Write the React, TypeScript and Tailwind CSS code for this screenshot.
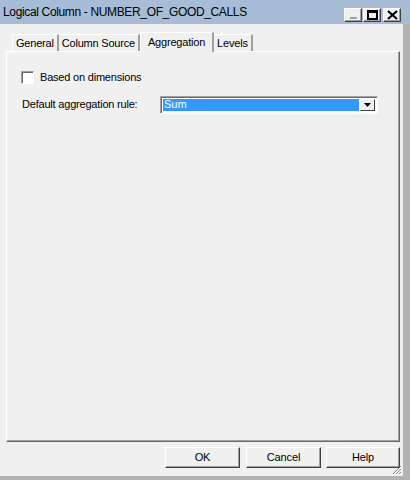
import React from "react";

const font = { fontFamily: '"Liberation Sans", Arial, sans-serif' };

function CaptionButton({ children }: { children: React.ReactNode }) {
  return (
    <div className="flex h-[14px] w-[18px] items-center justify-center border border-t-white border-l-white border-r-[#404040] border-b-[#404040] bg-[#f0f0f0] shadow-[inset_-1px_-1px_0_#a0a0a0]">
      {children}
    </div>
  );
}

function PushButton({ label, width }: { label: string; width: string }) {
  return (
    <button
      type="button"
      className={
        "flex h-[21px] items-center justify-center border border-t-white border-l-white border-r-[#404040] border-b-[#404040] bg-[#f0f0f0] text-[11px] tracking-[-0.1px] text-black shadow-[inset_-1px_-1px_0_#a0a0a0] " +
        width
      }
    >
      {label}
    </button>
  );
}

function Tab({ label, active, first }: { label: string; active?: boolean; first?: boolean }) {
  if (active) {
    return (
      <div className="relative z-10 -mb-px flex h-[20px] items-center border-l border-t border-white border-r-2 border-r-[#a0a0a0] bg-[#f0f0f0] px-[7px] text-[11px] tracking-[-0.2px]">
        {label}
      </div>
    );
  }
  return (
    <div
      className={
        "mt-[3px] flex h-[17px] items-center border-t border-white border-r-2 border-r-[#a0a0a0] px-[3px] text-[11px] tracking-[-0.2px] " +
        (first ? "border-l" : "")
      }
    >
      {label}
    </div>
  );
}

export default function App() {
  return (
    <div className="h-[480px] w-[410px] bg-[#b3b3b3] text-black" style={font}>
      <div className="flex h-[24px] items-center justify-between bg-[#a7bcd6] pl-[3px] pr-[9px]">
        <span className="text-[12px] tracking-[-0.35px]">Logical Column - NUMBER_OF_GOOD_CALLS</span>
        <div className="mt-[5px] flex items-center gap-[1px]">
          <CaptionButton>
            <span className="mt-[7px] block h-[2px] w-[7px] bg-[#a0a0a0]" />
          </CaptionButton>
          <CaptionButton>
            <span className="block h-[10px] w-[11px] border-2 border-t-[3px] border-black" />
          </CaptionButton>
          <div className="ml-[1px]">
            <CaptionButton>
              <svg width="11" height="10" viewBox="0 0 11 10">
                <path d="M1 1 L10 9 M10 1 L1 9" stroke="black" strokeWidth="2.2" />
              </svg>
            </CaptionButton>
          </div>
        </div>
      </div>
      <div className="flex h-[452px] w-[403px] flex-col bg-[#f0f0f0]">
        <div className="flex h-[27px] items-end pl-[12px]">
          <Tab label="General" first />
          <Tab label="Column Source" />
          <Tab label="Aggregation" active />
          <Tab label="Levels" />
        </div>
        <div className="ml-[6px] flex h-[391px] w-[394px] flex-col border border-t-white border-l-white border-r-[#696969] border-b-[#696969] shadow-[inset_-1px_-1px_0_#a0a0a0]">
          <label className="ml-[14px] mt-[17px] flex items-center gap-[6px] text-[11px] tracking-[-0.2px]">
            <span className="block h-[13px] w-[13px] border border-t-[#a0a0a0] border-l-[#a0a0a0] border-r-white border-b-white bg-white shadow-[inset_1px_1px_0_#696969]" />
            Based on dimensions
          </label>
          <div className="mt-[10px] flex items-center pl-[15px]">
            <span className="w-[138px] text-[11px] tracking-[-0.2px]">Default aggregation rule:</span>
            <div className="flex h-[18px] w-[218px] items-stretch border border-t-[#a0a0a0] border-l-[#a0a0a0] border-r-white border-b-white bg-white p-[2px] shadow-[inset_1px_1px_0_#696969]">
              <div className="flex flex-1 items-center bg-[#3399ff] pl-[1px] text-[11px] text-white">Sum</div>
              <div className="ml-[1px] flex w-[15px] items-center justify-center border border-t-white border-l-white border-r-[#404040] border-b-[#404040] bg-[#f0f0f0]">
                <svg width="7" height="4" viewBox="0 0 7 4">
                  <path d="M0 0 H7 L3.5 4 Z" fill="black" />
                </svg>
              </div>
            </div>
          </div>
        </div>
        <div className="relative flex flex-1 items-start justify-end pr-[3px] pt-[5px]">
          <PushButton label="OK" width="w-[75px]" />
          <div className="w-[6px]" />
          <PushButton label="Cancel" width="w-[75px]" />
          <div className="w-[5px]" />
          <PushButton label="Help" width="w-[74px]" />
          <svg className="absolute bottom-[1px] right-[1px]" width="11" height="11" viewBox="0 0 11 11">
            <path d="M10 2 L2 10 M10 5 L5 10 M10 8 L8 10" stroke="#808080" strokeWidth="1" />
            <path d="M10 3 L3 10 M10 6 L6 10 M10 9 L9 10" stroke="white" strokeWidth="1" />
          </svg>
        </div>
      </div>
    </div>
  );
}
